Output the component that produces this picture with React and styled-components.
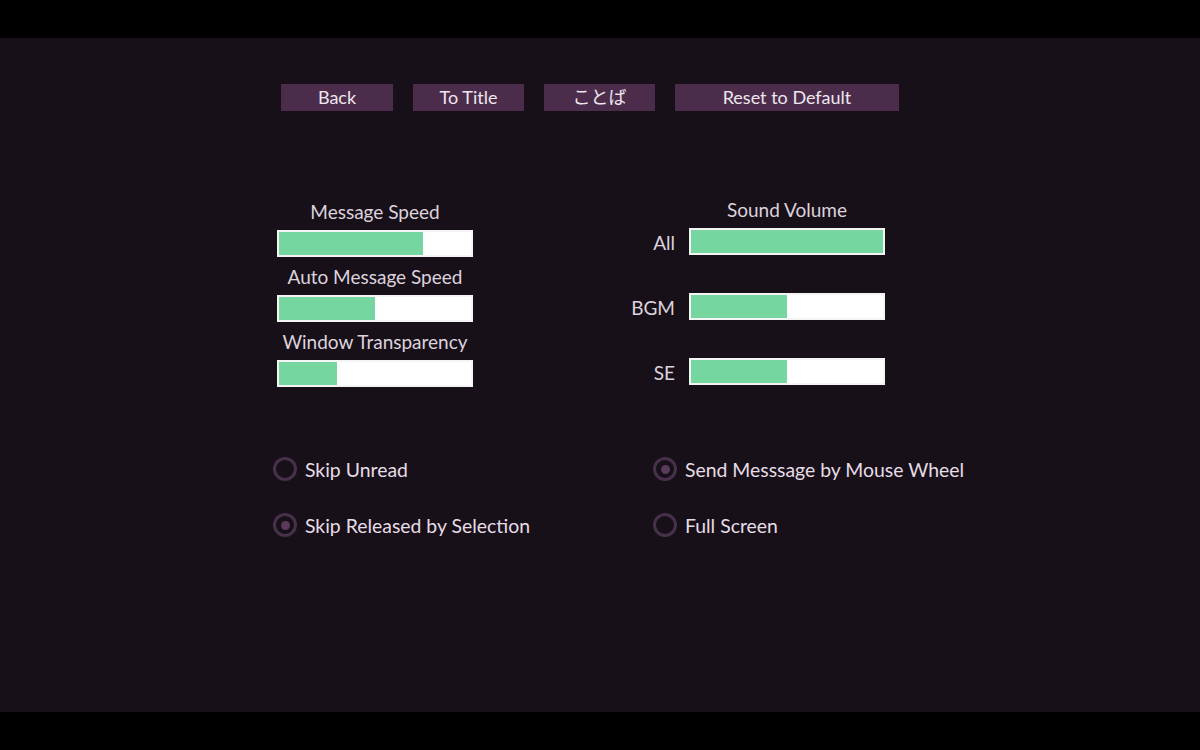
import React from "react";
import styled, { createGlobalStyle } from "styled-components";

const GlobalStyle = createGlobalStyle`
  html, body {
    margin: 0;
    padding: 0;
    background: #000;
  }
  body {
    font-family: Lato, "Noto Sans CJK JP", sans-serif;
  }
`;

const Stage = styled.div`
  width: 1200px;
  height: 750px;
  display: flex;
  flex-direction: column;
  background: #000;
`;

const Letterbox = styled.div`
  height: ${(props) => props.h}px;
  background: #000;
  flex-shrink: 0;
`;

const Screen = styled.div`
  flex: 1;
  background: #181019;
  padding: 46px 0 0 281px;
  box-sizing: border-box;
`;

const Toolbar = styled.div`
  display: flex;
  gap: 20px;
`;

const MenuButton = styled.button`
  width: ${(props) => props.width}px;
  height: 27px;
  border: none;
  padding: 0;
  background: #4b2d4b;
  color: #efe6ef;
  font-family: Lato, "Noto Sans CJK JP", sans-serif;
  font-size: 18px;
  line-height: 27px;
  text-align: center;
`;

const Sliders = styled.div`
  display: flex;
  margin: 81px 0 0 -4px;
`;

const LeftColumn = styled.div`
  width: 196px;
  display: flex;
  flex-direction: column;
`;

const SliderLabel = styled.div`
  height: 38px;
  line-height: 38px;
  padding-top: 1px;
  box-sizing: border-box;
  text-align: center;
  color: #ddd3dd;
  font-size: 19px;
  white-space: nowrap;
`;

const Track = styled.div`
  width: 196px;
  height: 27px;
  box-sizing: border-box;
  border: 2px solid #f4f4f4;
  background: #fff;
  flex-shrink: 0;
`;

const Fill = styled.div`
  height: 100%;
  background: #76d6a0;
`;

const RightColumn = styled.div`
  margin-left: 142px;
  display: flex;
  flex-direction: column;
`;

const VolumeTitle = styled.div`
  height: 36px;
  line-height: 36px;
  margin-left: 74px;
  width: 196px;
  text-align: center;
  color: #ddd3dd;
  font-size: 19px;
`;

const VolumeRows = styled.div`
  display: flex;
  flex-direction: column;
  gap: 38px;
`;

const VolumeRow = styled.div`
  display: flex;
  align-items: center;
  gap: 14px;
`;

const VolumeLabel = styled.div`
  width: 60px;
  text-align: right;
  color: #ddd3dd;
  font-size: 19px;
  padding-top: 2px;
`;

const Options = styled.div`
  display: grid;
  grid-template-columns: 380px 320px;
  row-gap: 24px;
  margin: 66px 0 0 -8px;
`;

const Option = styled.div`
  display: flex;
  align-items: center;
  height: 32px;
  gap: 8px;
  color: #e6dde6;
  font-size: 19.4px;
  white-space: nowrap;
`;

const Radio = styled.span`
  position: relative;
  width: 24px;
  height: 24px;
  box-sizing: border-box;
  border-radius: 50%;
  border: 3px solid #46304a;
  flex-shrink: 0;
  &::after {
    content: "";
    display: ${(props) => (props.checked ? "block" : "none")};
    position: absolute;
    left: 50%;
    top: 50%;
    width: 9px;
    height: 9px;
    margin: -4.5px 0 0 -4.5px;
    border-radius: 50%;
    background: #5a3a5c;
  }
`;

const Slider = ({ label, value }) => (
  <>
    <SliderLabel>{label}</SliderLabel>
    <Track>
      <Fill style={{ width: `${value}%` }} />
    </Track>
  </>
);

const volumes = [
  { label: "All", value: 100 },
  { label: "BGM", value: 50 },
  { label: "SE", value: 50 },
];

const options = [
  { label: "Skip Unread", checked: false },
  { label: "Send Messsage by Mouse Wheel", checked: true },
  { label: "Skip Released by Selection", checked: true },
  { label: "Full Screen", checked: false },
];

export default function App() {
  return (
    <>
      <GlobalStyle />
      <Stage>
        <Letterbox h={38} />
        <Screen>
          <Toolbar>
            <MenuButton width={112}>Back</MenuButton>
            <MenuButton width={111}>To Title</MenuButton>
            <MenuButton width={111}>ことば</MenuButton>
            <MenuButton width={224}>Reset to Default</MenuButton>
          </Toolbar>

          <Sliders>
            <LeftColumn>
              <Slider label="Message Speed" value={75} />
              <Slider label="Auto Message Speed" value={50} />
              <Slider label="Window Transparency" value={30} />
            </LeftColumn>
            <RightColumn>
              <VolumeTitle>Sound Volume</VolumeTitle>
              <VolumeRows>
                {volumes.map((v) => (
                  <VolumeRow key={v.label}>
                    <VolumeLabel>{v.label}</VolumeLabel>
                    <Track>
                      <Fill style={{ width: `${v.value}%` }} />
                    </Track>
                  </VolumeRow>
                ))}
              </VolumeRows>
            </RightColumn>
          </Sliders>

          <Options>
            {options.map((o) => (
              <Option key={o.label}>
                <Radio checked={o.checked} />
                {o.label}
              </Option>
            ))}
          </Options>
        </Screen>
        <Letterbox h={38} />
      </Stage>
    </>
  );
}
